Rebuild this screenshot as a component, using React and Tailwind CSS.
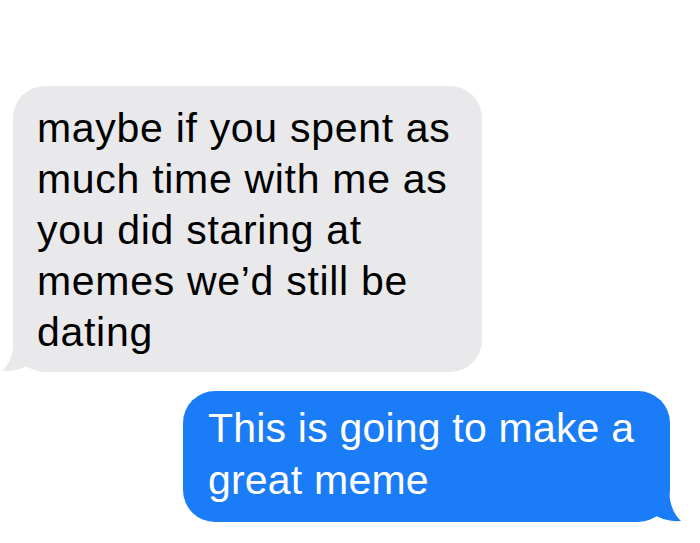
export default function App() {
  return (
    <div className="w-[700px] h-[543px] bg-white overflow-hidden flex flex-col" style={{ fontFamily: '"Liberation Sans", Arial, sans-serif' }}>
      <div className="pl-[13px] pt-[86px]">
        <div className="relative w-[469px] h-[286px] rounded-[32px] bg-[#e9e9eb] pl-[24px] pt-[17px] text-[41px] leading-[51px] text-black tracking-[0.7px]">
          <svg className="absolute left-[-11px] bottom-0" width="40" height="34" viewBox="0 0 40 34">
            <path d="M12 0 C12 14 8 26 0 33 C12 34 22 30 28 26 C32 29 36 31 40 32 L40 0 Z" fill="#e9e9eb" />
          </svg>
          <div className="relative">
            <div>maybe if you spent as</div>
            <div>much time with me as</div>
            <div>you did staring at</div>
            <div>memes we’d still be</div>
            <div>dating</div>
          </div>
        </div>
      </div>
      <div className="pl-[183px] pt-[19px]">
        <div className="relative w-[487px] h-[131px] rounded-[32px] bg-[#1a7cf6] pl-[25px] pt-[11px] text-[41px] leading-[52px] text-white tracking-[0.2px]">
          <svg className="absolute right-[-11px] bottom-0" width="40" height="34" viewBox="0 0 40 34">
            <path d="M28 0 C28 14 32 26 40 33 C28 34 18 30 12 26 C8 29 4 31 0 32 L0 0 Z" fill="#1a7cf6" />
          </svg>
          <div className="relative">
            <div>This is going to make a</div>
            <div>great meme</div>
          </div>
        </div>
      </div>
    </div>
  );
}
